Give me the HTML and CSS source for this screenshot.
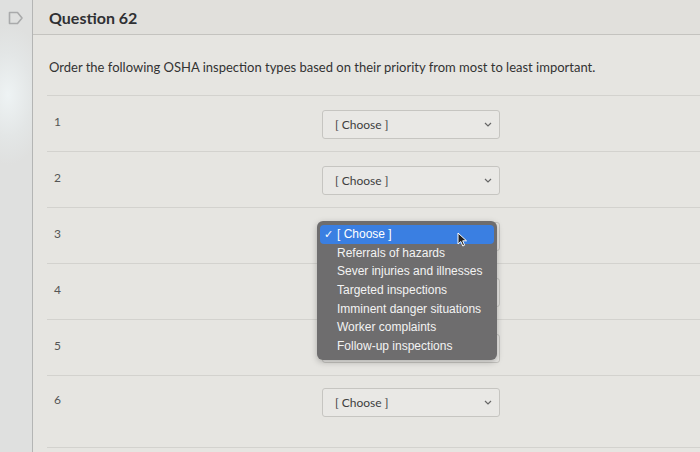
FILE: index.html
```html
<!DOCTYPE html>
<html>
<head>
<meta charset="utf-8">
<link rel="stylesheet" href="styles.css">
</head>
<body>
<div class="page">
  <aside class="gutter">
    <svg class="flag" width="16" height="16" viewBox="0 0 16 16"><path d="M1.5 2.5 H9.5 L14 8 L9.5 13.5 H1.5 Z" fill="none" stroke="#a9aaab" stroke-width="1.6" stroke-linejoin="round"/></svg>
  </aside>
  <main class="main">
    <header class="head">Question 62</header>
    <div class="content">
      <p class="prompt">Order the following OSHA inspection types based on their priority from most to least important.</p>
      <div class="rows">
        <div class="row"><span class="num">1</span><div class="sel"><span>[ Choose ]</span><svg class="chev" width="8" height="5" viewBox="0 0 8 5"><path d="M1 1 L4 4 L7 1" fill="none" stroke="#666" stroke-width="1.2"/></svg></div></div>
        <div class="row"><span class="num">2</span><div class="sel"><span>[ Choose ]</span><svg class="chev" width="8" height="5" viewBox="0 0 8 5"><path d="M1 1 L4 4 L7 1" fill="none" stroke="#666" stroke-width="1.2"/></svg></div></div>
        <div class="row"><span class="num">3</span><div class="sel covered"><span class="label">[ Choose ]</span><svg class="chev" width="8" height="5" viewBox="0 0 8 5"><path d="M1 1 L4 4 L7 1" fill="none" stroke="#666" stroke-width="1.2"/></svg></div></div>
        <div class="row"><span class="num">4</span><div class="sel covered"><span class="label">[ Choose ]</span><svg class="chev" width="8" height="5" viewBox="0 0 8 5"><path d="M1 1 L4 4 L7 1" fill="none" stroke="#666" stroke-width="1.2"/></svg></div></div>
        <div class="row"><span class="num">5</span><div class="sel covered"><span class="label">[ Choose ]</span><svg class="chev" width="8" height="5" viewBox="0 0 8 5"><path d="M1 1 L4 4 L7 1" fill="none" stroke="#666" stroke-width="1.2"/></svg></div></div>
        <div class="row last"><span class="num">6</span><div class="sel"><span>[ Choose ]</span><svg class="chev" width="8" height="5" viewBox="0 0 8 5"><path d="M1 1 L4 4 L7 1" fill="none" stroke="#666" stroke-width="1.2"/></svg></div></div>
      </div>
    </div>
  </main>
</div>
<ul class="menu">
  <li class="item active"><span class="check">✓</span>[ Choose ]</li>
  <li class="item">Referrals of hazards</li>
  <li class="item">Sever injuries and illnesses</li>
  <li class="item">Targeted inspections</li>
  <li class="item">Imminent danger situations</li>
  <li class="item">Worker complaints</li>
  <li class="item">Follow-up inspections</li>
</ul>
<svg class="cursor" width="12" height="16" viewBox="0 0 12 16"><path d="M1 1 L1 12 L3.8 9.5 L5.8 14 L7.6 13.2 L5.7 8.8 L9.5 8.8 Z" fill="#222" stroke="#fff" stroke-width="1"/></svg>
</body>
</html>
```

FILE: styles.css
```css
html, body {
  margin: 0;
  padding: 0;
}
body {
  width: 700px;
  height: 452px;
  overflow: hidden;
  background: #e6e5e1;
  font-family: Lato, "Noto Sans", sans-serif;
  color: #3d3d3d;
  position: relative;
}
.page {
  display: flex;
  height: 452px;
}
.gutter {
  width: 33px;
  flex: none;
  border-right: 1px solid #b4b5b4;
  background: radial-gradient(ellipse 40px 70px at 8px 95px, #eef3f4 0%, #e3e6e6 60%, #dfe0df 100%);
  padding: 10px 0 0 8px;
  box-sizing: border-box;
}
.flag {
  display: block;
}
.main {
  flex: 1;
  display: flex;
  flex-direction: column;
}
.head {
  height: 35px;
  box-sizing: border-box;
  padding: 8px 0 0 16px;
  font-size: 16px;
  font-weight: 700;
  color: #2f3033;
  background: #e1e0dc;
  border-bottom: 1px solid #c4c3bf;
}
.content {
  padding-left: 14px;
}
.prompt {
  margin: 0;
  padding: 24px 0 19px 2px;
  font-size: 13px;
  line-height: 17px;
  color: #333;
  border-bottom: 1px solid #d3d2ce;
}
.row {
  height: 56px;
  box-sizing: border-box;
  display: flex;
  align-items: flex-start;
  border-bottom: 1px solid #d3d2ce;
  padding-top: 14px;
}
.row.last {
  height: 72px;
  padding-top: 12px;
}
.num {
  width: 275px;
  flex: none;
  padding: 4px 0 0 7px;
  box-sizing: border-box;
  font-size: 12px;
  color: #555;
}
.sel {
  width: 178px;
  height: 29px;
  box-sizing: border-box;
  border: 1px solid #c6c5c1;
  border-radius: 3px;
  background: #e9e8e5;
  display: flex;
  align-items: center;
  justify-content: space-between;
  padding: 0 7px 0 12px;
  font-size: 12px;
  color: #3e3e3e;
}
.covered .label {
  visibility: hidden;
}
.chev {
  display: block;
}
.menu {
  position: absolute;
  left: 317px;
  top: 221px;
  width: 180px;
  margin: 0;
  padding: 4px 3px;
  box-sizing: border-box;
  list-style: none;
  background: #6e6d6e;
  border-radius: 6px;
  box-shadow: 0 2px 6px rgba(0,0,0,0.25);
  font-family: "Liberation Sans", Arial, sans-serif;
  font-size: 12px;
  color: #f3f3f3;
}
.item {
  height: 18.7px;
  line-height: 18.7px;
  padding-left: 17px;
  position: relative;
  white-space: nowrap;
}
.item.active {
  background: #3a7fe2;
  border-radius: 4px;
  color: #fff;
}
.check {
  position: absolute;
  left: 4px;
  top: 0;
  font-size: 11px;
}
.cursor {
  position: absolute;
  left: 457px;
  top: 232px;
}
```
